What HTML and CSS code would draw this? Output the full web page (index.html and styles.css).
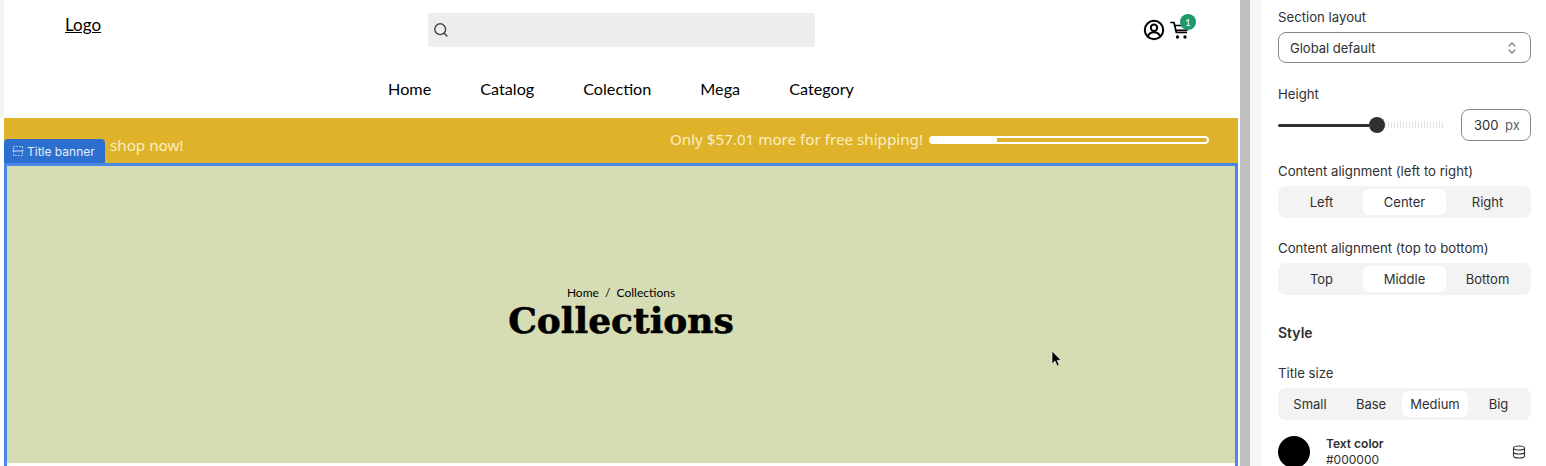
FILE: index.html
```html
<!DOCTYPE html>
<html lang="en">
<head>
  <meta charset="UTF-8" />
  <title>Title banner</title>
  <link rel="stylesheet" href="styles.css">
</head>
<body>

  <div class="editor">
    <main class="preview">
      <header class="site-header">
        <a class="logo" href="#">Logo</a>
        <div class="search">
          <svg width="16" height="16" viewBox="0 0 16 16" fill="none" stroke="#444" stroke-width="1.4" stroke-linecap="round"><circle cx="7.2" cy="7.2" r="5.4"/><path d="M11.2 11.2 14 14"/></svg>
        </div>
        <div class="header-icons">
          <svg width="22" height="22" viewBox="0 0 22 22" fill="none" stroke="#000" stroke-width="2"><circle cx="11" cy="11" r="9.2"/><circle cx="11" cy="8.8" r="3.2"/><path d="M4.8 17.6c1-3 3.4-4.4 6.2-4.4s5.200 1.400 6.200 4.400"/></svg>
          <div class="cart">
            <svg width="20" height="20" viewBox="0 0 20 20" fill="none" stroke="#000" stroke-width="1.7" stroke-linejoin="round" stroke-linecap="round"><path d="M1 2.500h3l2.300 10h10"/><path d="M4.700 5.500H18.500l-1.700 4.800H5.800"/><circle cx="7.500" cy="17" r=".8"/><circle cx="15" cy="17" r=".8"/></svg>
            <span class="cart-count">1</span>
          </div>
        </div>
      </header>

      <nav class="site-nav">
        <a href="#">Home</a>
        <a href="#">Catalog</a>
        <a href="#">Colection</a>
        <a href="#">Mega</a>
        <a href="#">Category</a>
      </nav>

      <div class="announcement">
        <span class="promo">shop now!</span>
        <div class="shipping">
          <span class="shipping-text">Only $57.01 more for free shipping!</span>
          <div class="progress"><div class="progress-fill" style="width: 24%"></div></div>
        </div>
      </div>

      <section class="banner-section">
        <div class="section-tag">
          <svg width="14" height="14" viewBox="0 0 14 14" fill="none" stroke="#cfe0fa" stroke-width="1"><path d="M1.500 7h11"/><path d="M2.500 2.500h9v9h-9z" stroke-dasharray="1.500 1.500"/></svg>
          Title banner
        </div>
        <div class="hero">
          <div class="breadcrumb">Home&nbsp; /&nbsp; Collections</div>
          <h1>Collections</h1>
        </div>
      </section>

      <svg class="cursor" width="12" height="17" viewBox="0 0 12 17"><path d="M1 1v13l3-3 2.200 5 2-1-2.100-4.700H10z" fill="#000" stroke="#fff" stroke-width=".6"/></svg>
    </main>

    <div class="scrollbar"></div>

    <aside class="panel">
      <label class="field-label">Section layout</label>
      <div class="select">
        Global default
        <svg width="10" height="14" viewBox="0 0 10 14" fill="none" stroke="#777" stroke-width="1.100" stroke-linecap="round" stroke-linejoin="round"><path d="M2 5 5 2l3 3M2 9l3 3 3-3"/></svg>
      </div>

      <label class="field-label mt">Height</label>
      <div class="range-row">
        <div class="range">
          <div class="range-track"></div>
          <div class="range-thumb"></div>
          <div class="range-ticks"></div>
        </div>
        <div class="number-input">300 <span>px</span></div>
      </div>

      <label class="field-label mt">Content alignment (left to right)</label>
      <div class="segments">
        <span>Left</span>
        <span class="active">Center</span>
        <span>Right</span>
      </div>

      <label class="field-label mt">Content alignment (top to bottom)</label>
      <div class="segments">
        <span>Top</span>
        <span class="active">Middle</span>
        <span>Bottom</span>
      </div>

      <h2 class="panel-heading">Style</h2>

      <label class="field-label mt">Title size</label>
      <div class="segments four">
        <span>Small</span>
        <span>Base</span>
        <span class="active">Medium</span>
        <span>Big</span>
      </div>

      <div class="color-row">
        <div class="swatch"></div>
        <div class="color-text">
          <strong>Text color</strong>
          <span>#000000</span>
        </div>
        <svg width="14" height="14" viewBox="0 0 14 14" fill="none" stroke="#303030" stroke-width="1.100"><ellipse cx="7" cy="3" rx="5.500" ry="2"/><path d="M1.500 3v8c0 1.100 2.500 2 5.500 2s5.500-.9 5.500-2V3M1.500 7c0 1.100 2.500 2 5.500 2s5.500-.9 5.500-2"/></svg>
      </div>
    </aside>
  </div>

</body>
</html>
```

FILE: styles.css
```css
html, body {
  height: 100%;
  margin: 0;
  padding: 0;
  overflow: hidden;
}

body {
  font-family: 'Inter', sans-serif;
  background-color: #fff;
  color: #303030;
}

.editor {
  display: flex;
  height: 466px;
  overflow: hidden;
}

/* store preview */

.preview {
  position: relative;
  width: 1234px;
  margin-left: 4px;
  margin-right: 2px;
  flex: none;
  font-family: 'Lato', sans-serif;
  color: #000;
}

.editor::before {
  content: "";
  position: absolute;
  left: 0;
  top: 0;
  width: 4px;
  height: 118px;
  background-color: #f3f3f3;
}

.site-header {
  display: grid;
  grid-template-columns: 424px 387px 1fr;
  height: 62px;
}

.logo {
  margin: 16px 0 0 61px;
  font-size: 17px;
  line-height: 18px;
  color: #000;
}

.search {
  display: flex;
  align-items: center;
  height: 34px;
  margin-top: 13px;
  padding-left: 5px;
  background-color: #eee;
  border-radius: 2px;
}

.header-icons {
  display: flex;
  align-items: center;
  gap: 5px;
  height: 22px;
  margin: 19px 0 0 328px;
}

.cart {
  position: relative;
  height: 20px;
}

.cart-count {
  position: absolute;
  top: -6px;
  left: 10px;
  width: 16px;
  height: 16px;
  border-radius: 50%;
  background-color: #1f9a6e;
  color: #fff;
  font-size: 10px;
  line-height: 16px;
  text-align: center;
}

.site-nav {
  display: flex;
  justify-content: center;
  gap: 49px;
  height: 56px;
  padding-top: 17px;
  box-sizing: border-box;
}

.site-nav a {
  color: #000;
  font-size: 16.2px;
  line-height: 20px;
  text-decoration: none;
}

.announcement {
  display: flex;
  height: 45px;
  background-color: #deb329;
  color: #fbeec4;
  font-family: 'Noto Sans', sans-serif;
  font-size: 15.2px;
}

.promo {
  margin: 16px 0 0 106px;
  line-height: 22px;
}

.shipping {
  display: flex;
  align-items: center;
  gap: 6px;
  height: 22px;
  margin: 11px 29px 0 auto;
}

.shipping-text {
  margin-bottom: 2px;
}

.progress {
  width: 280px;
  height: 8px;
  box-sizing: border-box;
  border: 2px solid #fff;
  border-radius: 4px;
}

.progress-fill {
  height: 100%;
  background-color: #fff;
}

.banner-section {
  position: relative;
  height: 320px;
  border: solid #4a87e8;
  border-width: 3px 3px 0;
}

.section-tag {
  position: absolute;
  left: -3px;
  bottom: calc(100% + 3px);
  display: flex;
  align-items: center;
  gap: 2px;
  height: 24px;
  padding: 0 10px 0 7px;
  background-color: #2d6fcf;
  border-radius: 4px 4px 0 0;
  color: #e6effc;
  font-family: 'Inter', sans-serif;
  font-size: 12px;
}

.hero {
  display: flex;
  flex-direction: column;
  align-items: center;
  justify-content: center;
  box-sizing: border-box;
  height: 297px;
  padding-bottom: 6px;
  background-color: #d6dcb4;
}

.breadcrumb {
  font-size: 12px;
  line-height: 16px;
}

.hero h1 {
  margin: 0;
  font-family: 'DejaVu Serif', serif;
  font-size: 36px;
  font-weight: 700;
  line-height: 38px;
  -webkit-text-stroke: 0.6px #000;
}

.cursor {
  position: absolute;
  left: 1047px;
  top: 350px;
}

.scrollbar {
  flex: none;
  width: 10px;
  background-color: #c0c0c0;
}

/* settings panel */

.panel {
  flex: 1;
  box-sizing: border-box;
  padding: 8px 15px 0 28px;
  background: linear-gradient(to right, #f6f6f6 12px, #fff 12px);
  font-size: 13px;
}

.field-label {
  display: block;
  font-size: 13.2px;
  line-height: 18px;
}

.mt {
  margin-top: 21px;
}

.select {
  display: flex;
  align-items: center;
  justify-content: space-between;
  box-sizing: border-box;
  height: 31px;
  margin: 6px 0 22px;
  padding: 0 13px 0 11px;
  border: 1px solid #8a8a8a;
  border-radius: 8px;
}

.range-row {
  display: flex;
  align-items: center;
  justify-content: space-between;
  margin-top: 6px;
}

.range {
  display: flex;
  align-items: center;
  width: 167px;
}

.range-track {
  width: 91px;
  height: 3px;
  background-color: #303030;
  border-radius: 2px 0 0 2px;
}

.range-thumb {
  width: 16px;
  height: 16px;
  border-radius: 50%;
  background-color: #303030;
}

.range-ticks {
  flex: 1;
  height: 6px;
  background: repeating-linear-gradient(to right, #e2e2e2 0 1px, transparent 1px 3px);
}

.number-input {
  box-sizing: border-box;
  width: 70px;
  height: 32px;
  padding-left: 12px;
  border: 1px solid #8a8a8a;
  border-radius: 8px;
  line-height: 30px;
}

.number-input span {
  margin-left: 3px;
  color: #616161;
}

.segments {
  display: grid;
  grid-template-columns: repeat(3, 1fr);
  box-sizing: border-box;
  height: 32px;
  margin-top: 6px;
  padding: 3px 2px;
  background-color: #f3f3f3;
  border-radius: 8px;
  text-align: center;
  line-height: 26px;
}

.segments.four {
  grid-template-columns: 60px 62px 66px 61px;
}

.segments .active {
  background-color: #fff;
  border-radius: 6px;
}

.panel-heading {
  margin: 28px 0 0;
  font-size: 14px;
  font-weight: 600;
  line-height: 20px;
}

.color-row {
  display: flex;
  align-items: center;
  gap: 16px;
  margin-top: 16px;
}

.swatch {
  width: 32px;
  height: 32px;
  border-radius: 50%;
  background-color: #000;
}

.color-text {
  flex: 1;
  display: flex;
  flex-direction: column;
  font-size: 12px;
  line-height: 16px;
}

.color-text strong {
  font-weight: 600;
}

.color-row svg {
  margin-right: 5px;
}
```
